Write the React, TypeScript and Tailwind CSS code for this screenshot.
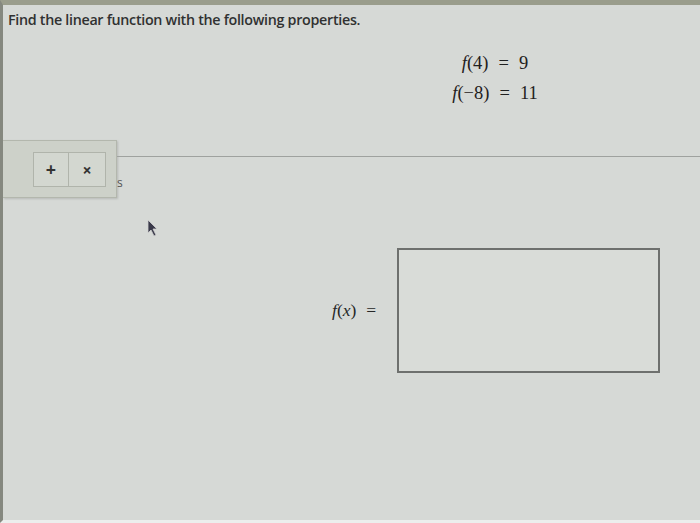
import React from "react";

const serif = { fontFamily: '"Liberation Serif", "DejaVu Serif", serif' };

export default function App() {
  return (
    <div className="relative w-[700px] h-[523px] overflow-hidden bg-[#d6d9d6] border-t-[5px] border-t-[#9a9d8c] border-l-[3px] border-l-[#85887f] border-b-[3px] border-b-[#eceeed] flex flex-col" style={{ fontFamily: '"Open Sans", "Liberation Sans", sans-serif' }}>
      <div className="pl-[5px] pt-[6px] text-[14.3px] leading-[18px] font-semibold text-[#303131] tracking-[-0.3px]">
        Find the linear function with the following properties.
      </div>
      <div className="mt-[24px] ml-[419px] w-[146px] flex flex-col items-center gap-[9px] text-[18.5px] leading-[21px] text-[#1f2020]" style={serif}>
        <div><i>f</i>(4)<span className="mx-[10px]">=</span>9</div>
        <div><i>f</i>(−8)<span className="mx-[10px]">=</span>11</div>
      </div>
      <div className="mt-[36px] flex items-start">
        <div className="w-[114px] h-[58px] bg-[#cdd1c9] border border-[#b3b7ad] border-l-0 flex items-start pt-[11px] pl-[30px] shadow-[1px_1px_2px_rgba(0,0,0,0.15)]">
          <div className="flex border border-[#b0b4ab] bg-[#d3d7d0]">
            <div className="w-[35px] h-[33px] flex items-center justify-center text-[#333] text-[18px] font-bold border-r border-[#b0b4ab]">+</div>
            <div className="w-[36px] h-[33px] flex items-center justify-center text-[#333] text-[16px] font-bold">×</div>
          </div>
        </div>
        <div className="flex-1 flex flex-col">
          <div className="mt-[16px] h-[1px] bg-[#9fa29f]"></div>
          <div className="mt-[20px] ml-[0px] text-[12px] leading-[12px] text-[#555]">s</div>
        </div>
      </div>
      <div className="mt-[50px] flex items-center">
        <div className="ml-[329px] w-[65px] text-[17.5px] text-[#262727]" style={serif}>
          <i>f</i>(<i>x</i>)<span className="ml-[10px]">=</span>
        </div>
        <div className="w-[263px] h-[125px] border-2 border-[#6e706e] bg-[#d9dcd8]"></div>
      </div>
      <svg className="absolute left-[143px] top-[214px]" width="14" height="18" viewBox="0 0 14 18">
        <path d="M2 1 L2 14 L5 11 L8 17 L10 16 L7 10 L11 10 Z" fill="#3a3a4a" stroke="#d0d0d0" strokeWidth="0.8" />
      </svg>
    </div>
  );
}
